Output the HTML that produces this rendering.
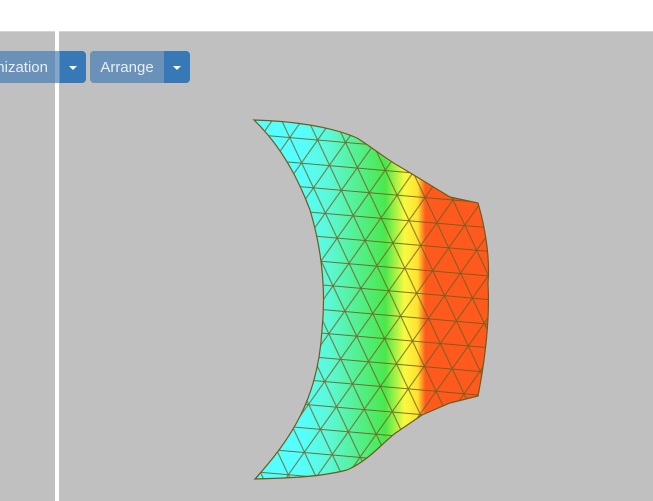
<!DOCTYPE html>
<html><head><style>
html,body{margin:0;width:653px;height:501px;overflow:hidden}
body{background:#c0c0c0;position:relative;font-family:"Liberation Sans",sans-serif}
.top{position:absolute;left:0;top:0;width:653px;height:31px;background:#fff;border-bottom:1px solid #d4d4d4}
.vl{position:absolute;left:55px;top:31px;width:4px;height:470px;background:#fff}
.b{position:absolute;top:51px;height:32px;color:#e8eef5;font-size:15px;line-height:34px;}
.l{background:rgba(60,120,180,0.65);}
.d{background:#3779b6;}
.d:after{content:"";position:absolute;left:50%;top:15px;margin-left:-4px;border-left:4px solid transparent;border-right:4px solid transparent;border-top:4px solid #fff}
</style></head><body>
<div class="top"></div>
<div class="vl"></div>
<div class="b l" style="left:0;width:60px"><span style="position:absolute;right:12px">mization</span></div>
<div class="b d" style="left:60px;width:26px;border-radius:0 4px 4px 0"></div>
<div class="b l" style="left:90px;width:74px;border-radius:4px 0 0 4px;text-align:center">Arrange</div>
<div class="b d" style="left:164px;width:26px;border-radius:0 4px 4px 0"></div>
<svg width="653" height="501" style="position:absolute;left:0;top:0;overflow:hidden">
<defs>
<linearGradient id="g" gradientUnits="userSpaceOnUse" x1="300" y1="0" x2="490" y2="0">
<stop offset="0" stop-color="#55ffff"/>
<stop offset="0.15" stop-color="#5cf8d8"/>
<stop offset="0.45" stop-color="#4be84a"/>
<stop offset="0.55" stop-color="#f8fa40"/>
<stop offset="0.62" stop-color="#ffe030"/>
<stop offset="0.66" stop-color="#ff5a1e"/>
<stop offset="1" stop-color="#ff5a1e"/>
</linearGradient>
<clipPath id="c"><path d="M254,120 C290,121 330,126 357,138 C370,146 385,158 397,165 L422,180 L450,197 L478,203 C486,230 490,260 488,283 C490,320 485,360 478,396 L450,403 L422,415 L397,432 C385,440 370,460 347,470 C320,477 290,478 255,479 C290,440 318,400 322,330 C326,290 322,250 310,210 C295,170 275,140 254,120 Z"/></clipPath>
<pattern id="p" width="28" height="48" patternUnits="userSpaceOnUse" patternTransform="translate(250,110) rotate(5)">
<path d="M0,0.5H28M0,24H28M0,48L28,0M0,0L28,48" stroke="#6e5a1c" stroke-width="1" fill="none"/>
</pattern>
</defs>
<g clip-path="url(#c)">
<rect x="240" y="110" width="260" height="380" fill="url(#g)"/>
<rect x="240" y="110" width="260" height="380" fill="url(#p)" opacity="0.85"/>
</g>
<path d="M254,120 C290,121 330,126 357,138 C370,146 385,158 397,165 L422,180 L450,197 L478,203 C486,230 490,260 488,283 C490,320 485,360 478,396 L450,403 L422,415 L397,432 C385,440 370,460 347,470 C320,477 290,478 255,479 C290,440 318,400 322,330 C326,290 322,250 310,210 C295,170 275,140 254,120 Z" fill="none" stroke="#6e5a1c" stroke-width="1.2"/>
</svg>
</body></html>
